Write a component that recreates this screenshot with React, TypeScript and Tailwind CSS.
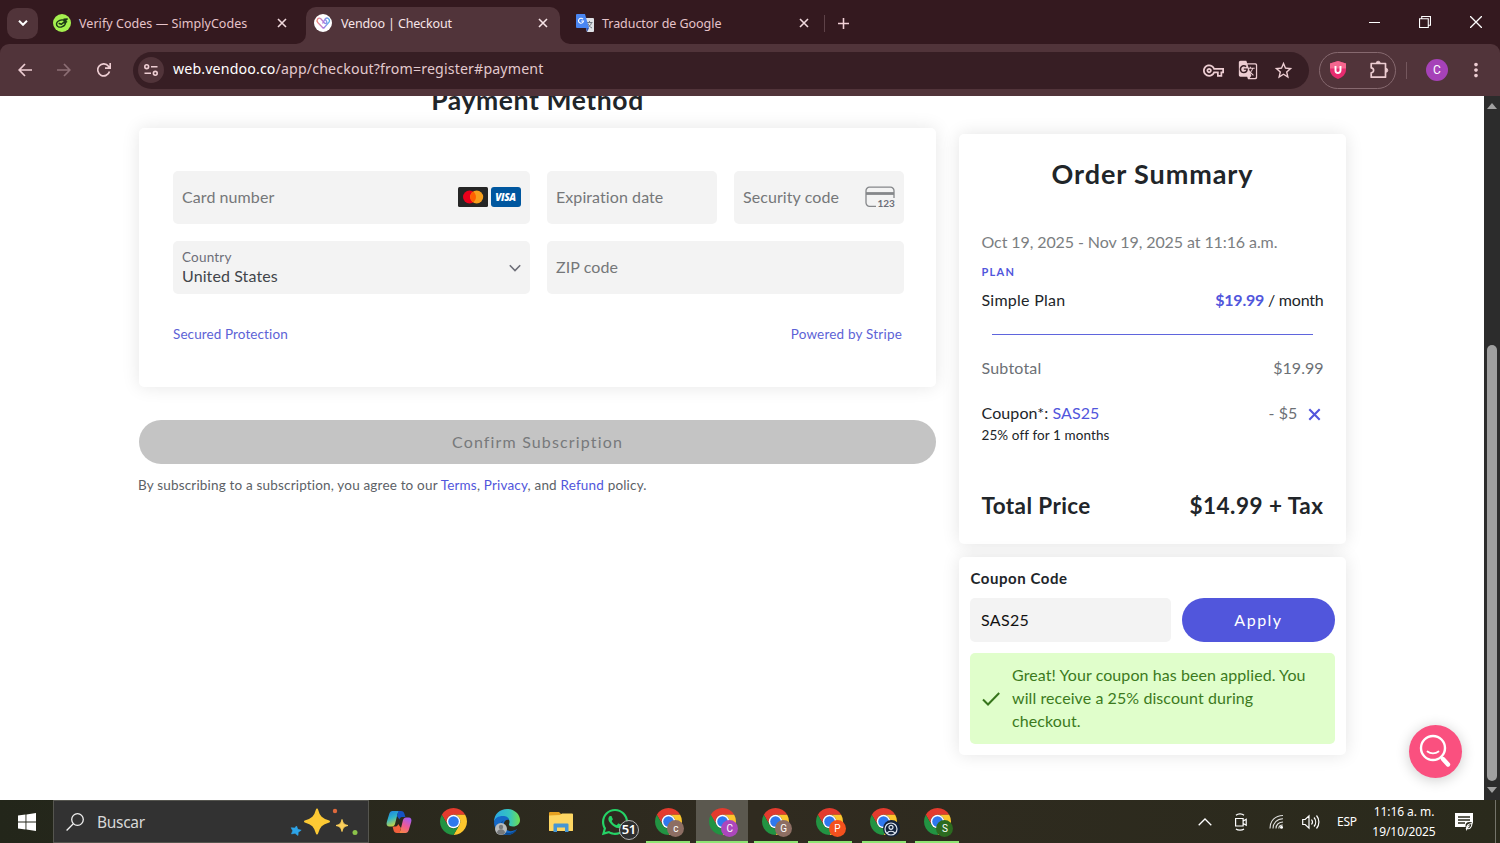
import { type ReactNode } from "react"
import { MdGTranslate, MdMoreVert, MdOutlineVpnKey, MdStarBorder } from "react-icons/md"
import { FaWhatsapp } from "react-icons/fa"

function ChromeLogo() {
  const blade = "M4.95 13A22 22 0 0 1 43.05 13H24A11 11 0 0 0 14.47 29.5Z"
  return (
    <svg viewBox="2 2 44 44" className="size-[27px]">
      <path d={blade} fill="#e33b2e" />
      <path d={blade} fill="#fcc62d" transform="rotate(120 24 24)" />
      <path d={blade} fill="#229342" transform="rotate(240 24 24)" />
      <circle cx="24" cy="24" r="11" fill="#fff" />
      <circle cx="24" cy="24" r="8.6" fill="#2f78ee" />
    </svg>
  )
}

function CloseIcon({ className }: { className?: string }) {
  return (
    <svg viewBox="0 0 10 10" className={className} fill="none" stroke="currentColor" strokeWidth="1.6">
      <path d="M1 1l8 8M9 1L1 9" />
    </svg>
  )
}

function SimplyCodesIcon() {
  return (
    <svg viewBox="0 0 18 18" className="size-[18px]">
      <circle cx="9" cy="9" r="9" fill="#a5f04f" />
      <g fill="none" stroke="#1d3a16" strokeWidth="1.5" strokeLinecap="round" strokeLinejoin="round">
        <ellipse cx="8" cy="9.5" rx="4.600" ry="3.400" transform="rotate(-22 8 9.500)" />
        <path d="M6.200 9.500l2.300.8 5.700-5.300-3.200.2M11 9l2.600-1.200" />
      </g>
    </svg>
  )
}

function VendooIcon() {
  return (
    <svg viewBox="0 0 18 18" className="size-[18px]">
      <defs>
        <linearGradient id="heart" x1="0" x2="1">
          <stop offset="0" stopColor="#f08a7c" />
          <stop offset=".5" stopColor="#b07be0" />
          <stop offset="1" stopColor="#55b4ee" />
        </linearGradient>
      </defs>
      <circle cx="9" cy="9" r="9" fill="#fff" />
      <path
        d="M9.500 14.500L3.800 8.500C1.800 6 4.500 3 6.800 4.800L10.500 9c1 1.300 3.200-.3 2-1.900L11.200 5.500M8.500 9.500L11.200 5c2.200-2.300 5.400.4 3.800 3.100L9.500 14.500"
        fill="none"
        stroke="url(#heart)"
        strokeWidth="1.300"
      />
    </svg>
  )
}

function TranslateIcon() {
  return (
    <svg viewBox="0 0 18 18" className="size-[18px]">
      <path d="M7 4h10a1 1 0 0 1 1 1v12a1 1 0 0 1-1 1h-6z" fill="#dfe1e5" />
      <path d="M10.500 8.500h6M13.500 7v1.500M15.500 8.500c-.5 2.500-2 4-4 5M12 9.500c.6 2 2 3.500 4 4.500" stroke="#6d7680" fill="none" />
      <path d="M1 0h8l4 14H1a1 1 0 0 1-1-1V1a1 1 0 0 1 1-1z" fill="#4a86f2" />
      <path d="M10 14h3l-2 4z" fill="#3056b8" />
      <path d="M7 5.200A2.500 2.500 0 1 0 7.500 7H5.200" stroke="#fff" strokeWidth="1.100" fill="none" />
    </svg>
  )
}

function TabStrip() {
  return (
    <div className="flex h-11 shrink-0 bg-[#34191f] text-[12.5px] tracking-[-0.15px] text-[#e6c3c9]">
      <div className="flex w-[306px] items-center pt-[2px]">
        <button className="ml-[7px] flex size-[31px] items-center justify-center rounded-[10px] bg-[#51343a] text-white">
          <svg viewBox="0 0 10 6" className="h-[6px] w-[10px]" fill="none" stroke="currentColor" strokeWidth="2">
            <path d="M1 .8l4 4 4-4" />
          </svg>
        </button>
        <div className="ml-[15px] flex w-[242px] items-center">
          <SimplyCodesIcon />
          <span className="ml-2 grow pt-[2px] tracking-[0.05px] whitespace-nowrap">Verify Codes — SimplyCodes</span>
          <CloseIcon className="mr-[8px] size-[10px] text-[#f1d9dd]" />
        </div>
      </div>
      <div className="relative mt-[7px] flex w-[254px] items-center rounded-t-[10px] bg-[#51343a] pr-3 pb-[5px] pl-2 text-[#f7e4e7]">
        <VendooIcon />
        <span className="ml-[9px] grow pt-[2px] whitespace-nowrap">Vendoo | Checkout</span>
        <CloseIcon className="size-[10px]" />
        <svg viewBox="0 0 10 10" className="absolute bottom-0 -left-[10px] size-[10px]" fill="#51343a">
          <path d="M10 0v10H0A10 10 0 0 0 10 0z" />
        </svg>
        <svg viewBox="0 0 10 10" className="absolute -right-[10px] bottom-0 size-[10px]" fill="#51343a">
          <path d="M0 0v10h10A10 10 0 0 1 0 0z" />
        </svg>
      </div>
      <div className="flex items-center pt-[2px] pl-4">
        <TranslateIcon />
        <span className="ml-2 w-[197px] pt-[2px] tracking-[-0.05px] whitespace-nowrap">Traductor de Google</span>
        <CloseIcon className="size-[10px] text-[#f1d9dd]" />
        <div className="ml-[15px] h-[17px] w-px bg-[#5e4248]" />
        <svg viewBox="0 0 12 12" className="ml-[13px] size-[11px]" stroke="#f1d0d6" strokeWidth="1.700">
          <path d="M6 0v12M0 6h12" />
        </svg>
      </div>
      <div className="ml-auto flex items-center gap-[39px] pr-[18px] text-white">
        <svg viewBox="0 0 11 11" className="size-[11px]" stroke="currentColor">
          <path d="M0 5.500h11" />
        </svg>
        <svg viewBox="0 0 11 11" className="size-[12px]" fill="none" stroke="currentColor">
          <path d="M.5 2.500h8v8h-8zM2.500 2.500v-2h8v8h-2" />
        </svg>
        <svg viewBox="0 0 11 11" className="size-[12px]" stroke="currentColor" strokeWidth="1.200">
          <path d="M0 0l11 11M11 0L0 11" />
        </svg>
      </div>
    </div>
  )
}

function Toolbar() {
  return (
    <div className="shrink-0 bg-[#34191f]">
      <div className="flex h-[52px] items-center rounded-t-[9px] bg-[#51343a] text-[#edcdd2]">
        <div className="flex w-[133px] items-center pl-[18px]">
          <svg viewBox="0 0 14 14" className="size-[14px]" fill="none" stroke="currentColor" strokeWidth="1.700">
            <path d="M14 7H1.500M7 1L1.200 7 7 13" />
          </svg>
          <svg viewBox="0 0 14 14" className="ml-[25px] size-[14px]" fill="none" stroke="#8c6e74" strokeWidth="1.700">
            <path d="M0 7h12.500M7 1l5.800 6L7 13" />
          </svg>
          <svg viewBox="0 0 14 14" className="ml-[26px] size-[14px]" fill="none" stroke="currentColor" strokeWidth="1.700">
            <path d="M12.500 8.500A6 6 0 1 1 11.500 3.200L13 5M13.200 0v5.200H8" />
          </svg>
        </div>
        <div className="flex h-[37px] w-[1176px] items-center rounded-full bg-[#371e24] pr-[15px] pl-[5px]">
          <div className="flex size-[26px] items-center justify-center rounded-full bg-[#51343a]">
            <svg viewBox="0 0 14 12" className="h-3 w-[14px]" fill="none" stroke="currentColor" strokeWidth="1.600">
              <circle cx="2.700" cy="2.700" r="1.900" />
              <path d="M7 2.700h6.500M.5 9.300H7" />
              <circle cx="11.300" cy="9.300" r="1.900" />
            </svg>
          </div>
          <span className="ml-[9px] grow pb-[2px] text-[14.2px] tracking-[0.14px] whitespace-nowrap text-[#e2c9cd]">
            <span className="text-white">web.vendoo.co</span>/app/checkout?from=register#payment
          </span>
          <MdOutlineVpnKey className="mr-[14px] size-[21px]" />
          <MdGTranslate className="mr-[15px] size-5" />
          <MdStarBorder className="size-[21px]" />
        </div>
        <div className="ml-[10px] flex h-[37px] w-[77px] items-center justify-between rounded-full border border-[#86696f] pr-[6px] pl-[10px]">
          <svg viewBox="0 0 16 18" className="h-[18px] w-4">
            <path d="M8 0l8 2.500v6C16 13 12.500 16.500 8 18 3.500 16.500 0 13 0 8.500v-6z" fill="#e72c6f" />
            <path d="M8 0l8 2.500v5H0v-5z" fill="#f4678f" />
            <path d="M5.500 5v4.500a2.500 2.500 0 0 0 5 0V5" fill="none" stroke="#fff" strokeWidth="1.900" />
          </svg>
          <svg viewBox="0 0 20 20" className="size-5" fill="none" stroke="currentColor" strokeWidth="1.700" strokeLinejoin="round">
            <path d="M2.200 3.500h14.300v13.700H2.200v-4.400c3.200-.2 3.200-4.700 0-4.900z" />
            <path d="M7.200 3.200a2 2 0 0 1 4 0zM16.800 8.300a2 2 0 0 1 0 4z" fill="currentColor" strokeWidth=".8" />
          </svg>
        </div>
        <div className="ml-[10px] h-[17px] w-px bg-[#74575d]" />
        <div className="ml-[19px] flex size-[22px] items-center justify-center rounded-full bg-[#a642b8] font-[Roboto] text-[12px] text-white">
          C
        </div>
        <MdMoreVert className="ml-[17px] size-[22px]" />
      </div>
    </div>
  )
}

function Field({ className, children }: { className: string; children: ReactNode }) {
  return (
    <div className={`flex h-[52.5px] items-center rounded-[5px] bg-[#f3f3f3] px-[9px] text-[16px] tracking-[0.08px] text-[#757779] ${className}`}>
      {children}
    </div>
  )
}

function PaymentForm() {
  return (
    <section className="-mt-[15px] ml-[139px] w-[797px]">
      <h2 className="h-[47px] text-center text-[26.5px] leading-[38px] font-bold tracking-[0.6px] whitespace-nowrap text-[#212529]">
        Payment Method
      </h2>
      <div className="h-[259px] rounded-[5px] bg-white pt-[43px] pr-[32px] pl-[34px] shadow-[0_0_18px_rgba(0,0,0,0.1)]">
        <div className="flex gap-[17.5px]">
          <Field className="w-[356.500px]">
            <span className="grow">Card number</span>
            <svg viewBox="0 0 30 20" className="h-5 w-[30px]">
              <rect width="30" height="20" rx="1.500" fill="#252525" />
              <circle cx="11.500" cy="10" r="6.500" fill="#eb001b" />
              <circle cx="18.700" cy="10" r="6.500" fill="#f79e1b" />
              <path d="M15.100 4.600a6.500 6.500 0 0 1 0 10.800 6.500 6.500 0 0 1 0-10.800z" fill="#ff5f00" />
            </svg>
            <span className="ml-[3px] flex h-5 w-[30px] items-center justify-center rounded-[3px] bg-[#00579f] font-['Open_Sans'] text-[10px] font-extrabold tracking-[-0.4px] text-white italic">
              VISA
            </span>
          </Field>
          <Field className="w-[169.500px]">
            <span>Expiration date</span>
          </Field>
          <Field className="w-[169.500px]">
            <span className="grow whitespace-nowrap">Security code</span>
            <svg viewBox="0 0 30 22" className="h-[22px] w-[30px]" fill="none" stroke="#85878a" strokeWidth="1.300">
              <path d="M11 20.300H4.500A3.500 3.500 0 0 1 1 16.800V4.700a3.500 3.500 0 0 1 3.500-3.500h21A3.500 3.500 0 0 1 29 4.700V12" />
              <path d="M1 7.500h28" strokeWidth="2.800" />
              <text x="12.500" y="20.700" fill="#6d6e78" stroke="none" fontSize="10" fontWeight="700" textLength="17.500">
                123
              </text>
            </svg>
          </Field>
        </div>
        <div className="mt-[17.500px] flex gap-[17.500px]">
          <Field className="w-[356.500px]">
            <div className="grow">
              <div className="text-[13.500px] leading-[18px] tracking-[0.2px] text-[#6d6e78]">Country</div>
              <div className="leading-[20px] tracking-[0.1px] text-[#42454a]">United States</div>
            </div>
            <svg viewBox="0 0 12 8" className="mt-[2px] h-2 w-3" fill="none" stroke="#6d6e78" strokeWidth="1.600">
              <path d="M.8 1.200L6 6.500l5.200-5.300" />
            </svg>
          </Field>
          <Field className="w-[356.500px]">
            <span>ZIP code</span>
          </Field>
        </div>
        <div className="mt-[30px] mr-[2px] flex justify-between text-[13.500px] leading-[20px] tracking-[0.1px] text-[#5d63d6]">
          <a>Secured Protection</a>
          <a className="tracking-[0.2px]">Powered by Stripe</a>
        </div>
      </div>
      <button className="mt-[33px] h-11 w-full rounded-full bg-[#c4c4c4] text-[16px] tracking-[1.150px] text-[#77797b]">
        Confirm Subscription
      </button>
      <p className="mt-[11px] -ml-px text-[13.500px] leading-[20px] tracking-[0.180px] text-[#5c6166]">
        By subscribing to a subscription, you agree to our <a className="text-[#5156dc]">Terms</a>,{" "}
        <a className="text-[#5156dc]">Privacy</a>, and <a className="text-[#5156dc]">Refund</a> policy.
      </p>
    </section>
  )
}

function OrderSummary() {
  return (
    <section className="mt-[38px] ml-[23px] w-[387px]">
      <div className="h-[410px] rounded-[5px] bg-white px-[22.500px] pt-[22px] text-[16px] leading-[22px] tracking-[0.1px] text-[#212529] shadow-[0_0_18px_rgba(0,0,0,0.11)]">
        <h2 className="text-center text-[27px] leading-[36px] font-bold tracking-[0.9px]">Order Summary</h2>
        <p className="mt-[39px] tracking-[-0.090px] whitespace-nowrap text-[#7b7e81]">Oct 19, 2025 - Nov 19, 2025 at 11:16 a.m.</p>
        <p className="mt-[10px] text-[11px] leading-[18px] font-bold tracking-[1.300px] text-[#5156dc]">PLAN</p>
        <div className="mt-[8px] flex justify-between">
          <span className="tracking-[0.25px]">Simple Plan</span>
          <span className="tracking-[-0.220px]">
            <b className="text-[#5156dc]">$19.99</b> / month
          </span>
        </div>
        <hr className="mr-[11px] ml-[10px] mt-[23px] border-t-[1.500px] border-[#5f65dd]" />
        <div className="mt-[22px] flex justify-between text-[#6c7075]">
          <span className="tracking-[0.2px]">Subtotal</span>
          <span className="tracking-[0]">$19.99</span>
        </div>
        <div className="mt-[23px] flex items-center">
          <span className="grow">
            Coupon*: <span className="text-[#5156dc]">SAS25</span>
          </span>
          <span className="text-[#6c7075]">- $5</span>
          <CloseIcon className="mt-[2px] mr-[3px] ml-[10px] size-[13px] text-[#5156dc]" />
        </div>
        <p className="mt-px text-[13.500px] leading-[20px]">25% off for 1 months</p>
        <div className="mt-[46px] flex justify-between text-[22.500px] leading-[30px] font-bold">
          <span className="tracking-[0.4px]">Total Price</span>
          <span className="tracking-[0.5px]">$14.99 + Tax</span>
        </div>
      </div>
      <div className="mt-[13px] h-[198px] rounded-[5px] bg-white px-[11px] pt-[11px] shadow-[0_0_18px_rgba(0,0,0,0.11)]">
        <h3 className="pl-[0.5px] text-[15px] leading-[21px] font-bold tracking-[0.55px] text-[#212529]">Coupon Code</h3>
        <div className="mt-[9px] flex h-11 gap-[11px]">
          <div className="flex w-[201px] items-center rounded-[5px] bg-[#f3f3f3] pb-px pl-[11px] text-[16px] tracking-[0.3px] text-[#111]">SAS25</div>
          <button className="w-[153px] rounded-full bg-[#5156dc] pb-px text-[16px] tracking-[1.500px] text-white">Apply</button>
        </div>
        <div className="mt-[11px] flex h-[91px] items-center rounded-[5px] bg-[#e0fecb] text-[16px] leading-[23px] tracking-[0.080px] text-[#3c7a1d]">
          <svg viewBox="0 0 18 14" className="mr-[12px] ml-[12px] h-[14px] w-[18px]" fill="none" stroke="#37751c" strokeWidth="2">
            <path d="M1 7.500l5 5L17.200 1" />
          </svg>
          <p className="pb-[3px] whitespace-nowrap">
            Great! Your coupon has been applied. You
            <br />
            will receive a 25% discount during
            <br />
            checkout.
          </p>
        </div>
      </div>
    </section>
  )
}

function Scrollbar() {
  return (
    <div className="flex w-4 shrink-0 flex-col items-center bg-[#2c2c2c] py-[7px]">
      <svg viewBox="0 0 10 6" className="h-[6px] w-[10px]" fill="#a0a0a0">
        <path d="M5 0l5 6H0z" />
      </svg>
      <div className="mt-[236px] h-[436px] w-[10px] rounded-full bg-[#9f9f9f]" />
      <svg viewBox="0 0 10 6" className="mt-auto h-[6px] w-[10px]" fill="#a0a0a0">
        <path d="M0 0h10L5 6z" />
      </svg>
    </div>
  )
}

function CopilotLogo() {
  return (
    <svg viewBox="0 0 26 24" className="h-6 w-[26px]">
      <defs>
        <linearGradient id="cpA" x1="0" x2=".4" y1="0" y2="1">
          <stop offset="0" stopColor="#1a7be8" />
          <stop offset=".5" stopColor="#2fb3c9" />
          <stop offset="1" stopColor="#c9d640" />
        </linearGradient>
        <linearGradient id="cpB" x1=".7" x2=".2" y1="0" y2="1">
          <stop offset="0" stopColor="#a65cf0" />
          <stop offset=".5" stopColor="#ee5a93" />
          <stop offset="1" stopColor="#f78b3d" />
        </linearGradient>
      </defs>
      <path d="M6.500 1H15c-2 0-3 1-3.500 3L9 14c-.5 1.500-1.500 2.500-3 2.500H3.500C1 16.500 0 14.500.8 12L3.200 4C3.800 2 4.800 1 6.500 1z" fill="url(#cpA)" />
      <path d="M12.500 1H15c2 0 3 1 3.500 3l.9 3H17c-2 0-3 .6-3.600 2.500L11 6z" fill="#1553c4" />
      <path d="M19.500 23H11c2 0 3-1 3.500-3L17 10c.5-1.500 1.500-2.500 3-2.500h2.500c2.500 0 3.500 2 2.700 4.500L22.800 20c-.6 2-1.600 3-3.300 3z" fill="url(#cpB)" />
      <path d="M13.500 23H11c-2 0-3-1-3.500-3l-.9-3.500H9c1.500 0 2.600-.6 3.200-2.500L15 18z" fill="#f2603c" />
    </svg>
  )
}

function EdgeLogo() {
  return (
    <svg viewBox="0 0 28 28" className="size-7">
      <defs>
        <linearGradient id="edTop" x1="0" x2="1">
          <stop offset="0" stopColor="#2aa7e4" />
          <stop offset=".6" stopColor="#35c4bf" />
          <stop offset="1" stopColor="#6fe04f" />
        </linearGradient>
      </defs>
      <path d="M1 14C1 6 7 1 14 1s13 5 13 11c0 4-3 6.500-7 6.500-3 0-4.500-1-4-2.500C17.500 13 16 9 10 9c-5 0-8 2-9 5z" fill="url(#edTop)" />
      <path d="M1 14c1-4 4-6 9-6 3 0 6 1.500 6 4-3-1-6 2-5 6 1 5 7 7 13 3-2 4-6 6-10 6C7 27 1 22 1 14z" fill="#1468c7" />
      <path d="M11 12c-3 2-3 9 1 12 3 2 8 1 12-3-2 4-6 6-10 6-4-1-8-5-7-10 .5-2 2-4 4-5z" fill="#0d4a8f" />
      <circle cx="8" cy="21" r="6" fill="#b9bcbe" />
      <circle cx="8" cy="19" r="2.200" fill="#77797b" />
      <path d="M4 25c0-5 8-5 8 0-2 2.300-6 2.300-8 0z" fill="#77797b" />
    </svg>
  )
}

const windows = [
  { letter: "c", badge: "bg-[#8d6e63]", open: "bg-transparent" },
  { letter: "C", badge: "bg-[#ab47bc]", open: "bg-[#5b584f]" },
  { letter: "G", badge: "bg-[#8d6e63]", open: "bg-transparent" },
  { letter: "P", badge: "bg-[#f4511e]", open: "bg-transparent" },
  { letter: "", badge: "bg-[#13233c]", open: "bg-transparent" },
  { letter: "S", badge: "bg-[#2c6a20]", open: "bg-transparent" },
]

function Taskbar() {
  return (
    <div className="flex h-[43px] shrink-0 bg-linear-to-r from-[#23261a] via-[#302b20] to-[#2a2a1c] text-white">
      <div className="flex w-[53px] items-center justify-center">
        <svg viewBox="0 0 18 18" className="size-[18px]" fill="#fff">
          <path d="M0 2.600l7.500-1V8.600H0zM8.400 1.400L18 0v8.600H8.400zM0 9.400h7.500v7L0 15.400zM8.400 9.400H18V18l-9.600-1.400z" />
        </svg>
      </div>
      <div className="flex w-[316px] items-center border border-[#55554f] bg-[#323232] pl-3 text-[#d8d8d8]">
        <svg viewBox="0 0 18 18" className="size-[18px]" fill="none" stroke="#f0f0f0" strokeWidth="1.300">
          <circle cx="11.500" cy="6.500" r="5.800" />
          <path d="M7.300 10.800L.6 17.500" />
        </svg>
        <span className="ml-[13px] grow pt-[2px] text-[15.500px] tracking-[-0.300px]">Buscar</span>
        <svg viewBox="0 0 68 28" className="mr-[10px] h-7 w-[68px]">
          <path
            d="M27 1.500c2 7.500 4.500 10 12 12-7.500 2-10 4.500-12 12-2-7.500-4.500-10-12-12 7.500-2 10-4.500 12-12z"
            fill="#fcc934"
            stroke="#fcc934"
            strokeWidth="2"
            strokeLinejoin="round"
          />
          <path d="M52 11.500c1 4 2 5 6 6-4 1-5 2-6 6-1-4-2-5-6-6 4-1 5-2 6-6z" fill="#fbcf5a" stroke="#fbcf5a" strokeLinejoin="round" />
          <path d="M6.500 18l1.300 3.300 3.400.9-3 2-.2 3.300-3-2.200-3.500.6 1.200-3.200-1.500-3 3.500.4z" fill="#2da4e8" stroke="#2da4e8" strokeWidth=".6" />
          <circle cx="45" cy="3" r="2.200" fill="#e0693c" />
          <circle cx="65" cy="24.500" r="2.500" fill="#8bc34a" />
        </svg>
      </div>
      <div className="ml-[3.500px] flex">
        <div className="flex w-[53.800px] items-center justify-center">
          <CopilotLogo />
        </div>
        <div className="flex w-[53.800px] items-center justify-center">
          <ChromeLogo />
        </div>
        <div className="flex w-[53.800px] items-center justify-center">
          <EdgeLogo />
        </div>
        <div className="flex w-[53.800px] items-center justify-center">
          <svg viewBox="0 0 24 20" className="h-5 w-6">
            <path d="M0 1a1 1 0 0 1 1-1h9l2 2h11a1 1 0 0 1 1 1v16H0z" fill="#e5a122" />
            <path d="M0 3.500l11-.5 2-1.500h10a1 1 0 0 1 1 1V18a1 1 0 0 1-1 1H1a1 1 0 0 1-1-1z" fill="#fdd663" />
            <path d="M4.500 20v-7.500a1 1 0 0 1 1-1h13a1 1 0 0 1 1 1V20H16v-4.500H8V20z" fill="#4596d4" />
          </svg>
        </div>
        <div className="relative flex w-[53.800px] items-center justify-center">
          <FaWhatsapp className="size-[30px] text-[#25d366]" />
          <span className="absolute top-[20px] left-[31px] flex size-[20px] items-center justify-center rounded-full border border-[#b5b5b5] bg-[#2f3030] text-[13px] font-semibold tracking-[-0.5px]">
            51
          </span>
        </div>
        {windows.map((w, i) => (
          <div key={i} className="relative flex w-[53.800px] justify-center px-px">
            <div className={`flex w-full items-center justify-center ${w.open}`}>
              <ChromeLogo />
            </div>
            <span className={`absolute top-[20px] left-[26px] flex size-[17px] items-center justify-center rounded-full font-[Roboto] text-[10px] ${w.badge}`}>
              {w.letter || (
                <svg viewBox="0 0 14 14" className="size-[14px]" fill="none" stroke="#dfe7f2" strokeWidth="1.200">
                  <circle cx="7" cy="7" r="6" />
                  <circle cx="7" cy="5.300" r="2" />
                  <path d="M3 11.200c1.500-2.600 6.500-2.600 8 0" />
                </svg>
              )}
            </span>
            <div className={`absolute bottom-0 h-[2px] bg-[#8ee573] ${w.letter === "C" ? "w-[52px]" : "w-[44px]"}`} />
          </div>
        ))}
      </div>
      <div className="ml-auto flex items-center text-[12px] tracking-[-0.2px]">
        <svg viewBox="0 0 14 8" className="h-2 w-[14px]" fill="none" stroke="#fff" strokeWidth="1.300">
          <path d="M.7 7.300L7 1l6.300 6.300" />
        </svg>
        <svg viewBox="0 0 14 18" className="ml-[22px] h-[18px] w-[14px]" fill="none" stroke="#fff" strokeWidth="1.200">
          <path d="M1.600 5.500h7.500v7.500H1.600zM9.200 8l3-1.800v6l-3-1.800M2 2.300C4 .5 8 .5 10 2.300M2 16c2 1.600 6 1.600 8 0" />
        </svg>
        <svg viewBox="0 0 15 15" className="ml-[21px] size-[15px]" fill="none" stroke="#fff" strokeWidth="1.100">
          <path d="M1 14.500C1 7 6 1.500 14 1.500M4 14.500C4 9 8 4.800 14 4.800M7 14.500c0-4 3-6.500 7-6.500M9.800 14.500c0-2 1.700-3.500 4-3.500" opacity=".85" />
          <circle cx="12.500" cy="13.300" r="1.500" fill="#fff" stroke="none" />
        </svg>
        <svg viewBox="0 0 18 16" className="ml-[18px] h-4 w-[18px]" fill="none" stroke="#fff" strokeWidth="1.200">
          <path d="M.7 5.500h2.500L7 1.800v12.400l-3.800-3.700H.7zM9.500 5.500c1.200 1.500 1.200 3.500 0 5M12 3.500c2.200 2.600 2.200 6.400 0 9M14.500 1.500c3.200 3.800 3.200 9.200 0 13" />
        </svg>
        <span className="ml-[17px] w-[26px]">ESP</span>
        <div className="ml-[3px] w-[76px] text-center leading-[20px] tracking-[-0.050px] whitespace-nowrap">
          <div>11:16 a. m.</div>
          <div>19/10/2025</div>
        </div>
        <svg viewBox="0 0 19 18" className="ml-[13px] h-[18px] w-[19px]">
          <path d="M0 0h18v14h-4l-3 4v-4H0z" fill="#fff" />
          <path d="M3 4h12M3 7h12M3 10h7" stroke="#2a2a1c" strokeWidth="1.300" />
          <circle cx="14.500" cy="13" r="4" fill="#2a2a1c" />
          <path d="M11.500 15.500c0-3 2-5 5.500-5-.3 4-2.300 6-5.500 5l3-3" fill="none" stroke="#fff" strokeWidth="1.100" />
        </svg>
        <div className="ml-[21px] h-full w-px bg-[#74746a]" />
        <div className="w-1" />
      </div>
    </div>
  )
}

export default function App() {
  return (
    <div className="relative flex h-[843px] w-[1500px] flex-col overflow-hidden bg-white font-['Noto_Sans',sans-serif]">
      <TabStrip />
      <Toolbar />
      <main className="flex h-[704px] shrink-0 overflow-hidden font-[Lato,sans-serif]">
        <div className="flex w-[1484px] items-start">
          <PaymentForm />
          <OrderSummary />
        </div>
        <Scrollbar />
      </main>
      <Taskbar />
      <button className="absolute top-[725px] left-[1409px] size-[53px] rounded-full bg-[#fa507f] shadow-[0_2px_14px_rgba(0,0,0,0.2)]">
        <svg viewBox="0 0 53 53" className="size-[53px]" fill="none" stroke="#fff" strokeLinecap="round">
          <circle cx="24" cy="23" r="12" strokeWidth="2.400" />
          <path d="M18.500 26.500c3 2.500 8 2.500 11 0" strokeWidth="1.800" />
          <path d="M32 32l2.500 2.500" strokeWidth="2.400" />
          <path d="M34 34l5 5.500" strokeWidth="4.400" />
        </svg>
      </button>
    </div>
  )
}
